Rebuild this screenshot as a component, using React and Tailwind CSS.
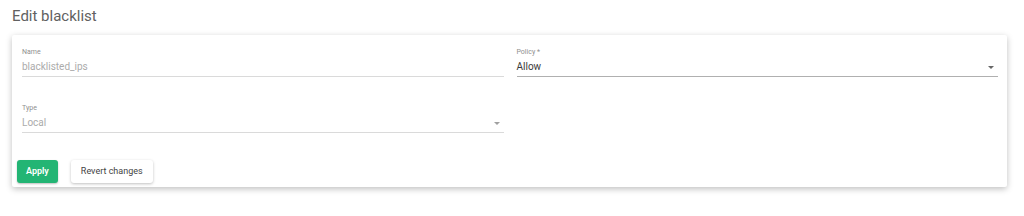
export default function App() {
  const Field = ({ label, value, muted, select }) => (
    <div className="flex flex-col">
      <span className="text-[7px] leading-[10px] text-[#909090]">{label}</span>
      <div className={`flex items-center justify-between h-[20px] border-b ${muted ? "border-[#dadada]" : "border-[#b0b0b0]"}`}>
        <span className={`text-[10px] ${muted ? "text-[#ababab]" : "text-[#3a3a3a]"}`}>{value}</span>
        {select && (
          <svg width="10" height="10" viewBox="0 0 10 10" className="mr-[2px]">
            <path d="M2 4 L8 4 L5 7 Z" fill={muted ? "#a0a0a0" : "#666"} />
          </svg>
        )}
      </div>
    </div>
  );

  return (
    <div className="w-[1024px] h-[216px] bg-white px-[12px] pt-[4px]" style={{ fontFamily: "Roboto, 'Liberation Sans', sans-serif" }}>
      <h1 className="text-[15px] leading-[24px] text-[#616161] font-normal">Edit blacklist</h1>
      <div className="mt-[7px] w-[995px] bg-white shadow-[0_2px_6px_rgba(0,0,0,0.25)] rounded-[2px] pt-[12px] pb-[4px]">
        <div className="grid grid-cols-2 gap-x-[13px] gap-y-[26px] pl-[10px] pr-[9px]">
          <Field label="Name" value="blacklisted_ips" muted />
          <Field label="Policy *" value="Allow" select />
          <Field label="Type" value="Local" muted select />
        </div>
        <div className="flex gap-[13px] pl-[5px] mt-[27px]">
          <button className="h-[23px] px-[9px] rounded-[3px] bg-[#23b574] text-white text-[9px] font-semibold shadow-[0_1px_2px_rgba(0,0,0,0.25)]">Apply</button>
          <button className="h-[23px] px-[10px] rounded-[3px] bg-white text-[#444] text-[9px] font-normal shadow-[0_1px_3px_rgba(0,0,0,0.25)]">Revert changes</button>
        </div>
      </div>
    </div>
  );
}
